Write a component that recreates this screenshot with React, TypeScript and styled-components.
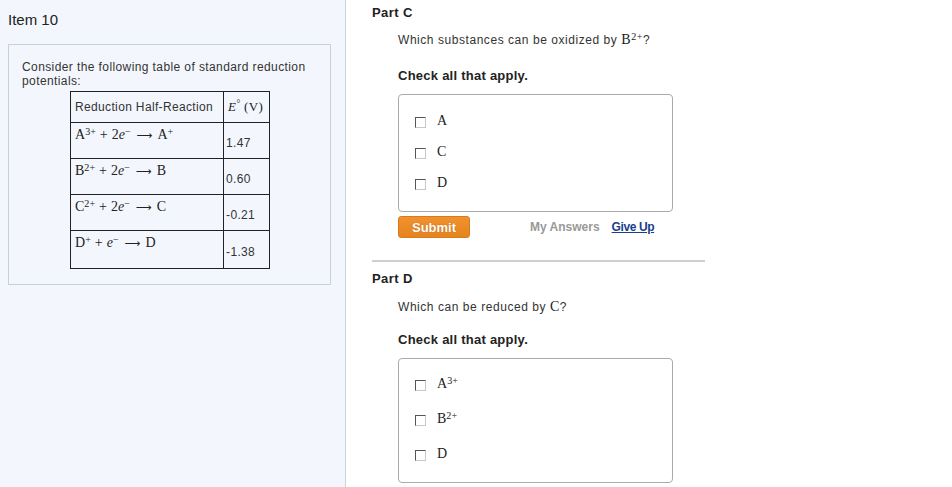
import React from "react";
import styled, { createGlobalStyle } from "styled-components";

const GlobalStyle = createGlobalStyle`
  html, body {
    margin: 0;
    padding: 0;
    background: #ffffff;
    font-family: "Liberation Sans", Arial, sans-serif;
    color: #333;
  }
`;

const Page = styled.div`
  display: flex;
  width: 952px;
  height: 487px;
  overflow: hidden;
`;

const LeftPanel = styled.div`
  width: 346px;
  flex: none;
  background: #f3f7fd;
  border-right: 1px solid #c9d2de;
  padding: 11px 0 0 8px;
  box-sizing: border-box;
`;

const ItemTitle = styled.div`
  font-size: 15px;
  line-height: 18px;
  color: #222;
`;

const InfoBox = styled.div`
  margin-top: 15px;
  width: 323px;
  box-sizing: border-box;
  border: 1px solid #c8d0dc;
  padding: 15px 0 15px 13px;
`;

const InfoText = styled.p`
  margin: 0 0 3px;
  font-size: 12px;
  line-height: 14px;
  letter-spacing: 0.4px;
  color: #333;
  padding-right: 10px;
`;

const Table = styled.table`
  border-collapse: collapse;
  margin-left: 48px;
  width: 200px;
  font-size: 12px;
`;

const HeadCell = styled.th`
  border: 1px solid #222;
  height: 30px;
  padding: 0 4px;
  font-weight: normal;
  text-align: left;
  white-space: nowrap;
  letter-spacing: 0.35px;
  color: #333;
`;

const ReactionCell = styled.td<{ $tall?: boolean }>`
  border: 1px solid #222;
  height: ${(p) => (p.$tall ? 33 : 31)}px;
  padding: 4px 4px 0;
  vertical-align: top;
  white-space: nowrap;
`;

const ValueCell = styled.td`
  border: 1px solid #222;
  padding: 4px 2px 0;
  vertical-align: middle;
  color: #333;
  letter-spacing: 0.3px;
`;

const Math = styled.span<{ $size?: number }>`
  font-family: "Liberation Serif", "DejaVu Serif", serif;
  font-size: ${(p) => p.$size ?? 14}px;
  color: #222;

  sup {
    font-size: 0.72em;
    line-height: 0;
    vertical-align: 0.42em;
  }

  i {
    font-style: italic;
  }
`;

const Op = styled.span`
  margin: 0 4px;
`;

const Arrow = styled.span`
  display: inline-block;
  margin: 0 5px 0 6px;
  font-family: "DejaVu Sans", sans-serif;
  font-size: 11px;
`;

const RightPanel = styled.div`
  flex: 1;
  padding: 5px 0 0 26px;
  box-sizing: border-box;
`;

const PartTitle = styled.div`
  font-size: 13px;
  line-height: 16px;
  font-weight: bold;
  letter-spacing: 0.4px;
  color: #222;
`;

const PartBody = styled.div`
  padding-left: 26px;
`;

const Question = styled.div<{ $gap: number }>`
  margin-top: ${(p) => p.$gap}px;
  font-size: 12px;
  line-height: 16px;
  letter-spacing: 0.55px;
  color: #333;
`;

const Hint = styled.div<{ $gap: number }>`
  margin-top: ${(p) => p.$gap}px;
  font-size: 13px;
  line-height: 16px;
  font-weight: bold;
  letter-spacing: 0.25px;
  color: #222;
`;

const ChoiceBox = styled.div<{ $height: number; $gap: number }>`
  margin-top: ${(p) => p.$gap}px;
  width: 275px;
  height: ${(p) => p.$height}px;
  box-sizing: border-box;
  border: 1px solid #aaa;
  border-radius: 4px;
  background: #fff;
  padding: ${(p) => (p.$height > 120 ? "16px" : "17px")} 0 0 16px;
  display: flex;
  flex-direction: column;
  gap: ${(p) => (p.$height > 120 ? "17px" : "13px")};
`;

const Choice = styled.label`
  display: flex;
  align-items: center;
  gap: 11px;
  height: 18px;
`;

const Box = styled.span`
  display: inline-block;
  width: 9px;
  height: 9px;
  margin-top: 3px;
  border-top: 1px solid #555;
  border-left: 1px solid #555;
  border-right: 1px solid #c8c8c8;
  border-bottom: 1px solid #c8c8c8;
  background: #fff;
`;

const Actions = styled.div`
  margin-top: 4px;
  display: flex;
  align-items: center;
  width: 275px;
`;

const SubmitButton = styled.button`
  width: 72px;
  height: 22px;
  border: 1px solid #d97b1c;
  border-radius: 3px;
  background: linear-gradient(#f0922e, #e5841f);
  color: #fff;
  font-family: "Liberation Sans", Arial, sans-serif;
  font-size: 13px;
  font-weight: bold;
  text-shadow: 0 0 1px #a85a10;
  padding: 0;
`;

const MyAnswers = styled.span`
  margin-left: 60px;
  font-size: 12px;
  font-weight: bold;
  color: #999;
`;

const GiveUp = styled.a`
  margin-left: 12px;
  font-size: 12px;
  font-weight: bold;
  letter-spacing: -0.4px;
  color: #1a3e8c;
  text-decoration: underline;
`;

const Divider = styled.hr`
  margin: 22px 0 0;
  width: 333px;
  border: none;
  border-top: 2px solid #cfcfcf;
`;

const Spacer = styled.div<{ $h: number }>`
  height: ${(p) => p.$h}px;
`;

const rows = [
  { from: "A", fromCharge: "3+", n: "2", to: "A", toCharge: "+", value: "1.47" },
  { from: "B", fromCharge: "2+", n: "2", to: "B", toCharge: "", value: "0.60" },
  { from: "C", fromCharge: "2+", n: "2", to: "C", toCharge: "", value: "-0.21" },
  { from: "D", fromCharge: "+", n: "", to: "D", toCharge: "", value: "-1.38" },
];

const App: React.FC = () => {
  return (
    <Page>
      <GlobalStyle />
      <LeftPanel>
        <ItemTitle>Item 10</ItemTitle>
        <InfoBox>
          <InfoText>
            Consider the following table of standard reduction potentials:
          </InfoText>
          <Table>
            <thead>
              <tr>
                <HeadCell>Reduction Half-Reaction</HeadCell>
                <HeadCell>
                  <Math $size={13}>
                    <i>E</i>
                    <sup>°</sup> (V)
                  </Math>
                </HeadCell>
              </tr>
            </thead>
            <tbody>
              {rows.map((r, i) => (
                <tr key={r.from}>
                  <ReactionCell $tall={i === rows.length - 1}>
                    <Math>
                      {r.from}
                      <sup>{r.fromCharge}</sup>
                      <Op>+</Op>
                      {r.n}
                      <i>e</i>
                      <sup>−</sup>
                      <Arrow>⟶</Arrow>
                      {r.to}
                      {r.toCharge && <sup>{r.toCharge}</sup>}
                    </Math>
                  </ReactionCell>
                  <ValueCell>{r.value}</ValueCell>
                </tr>
              ))}
            </tbody>
          </Table>
        </InfoBox>
      </LeftPanel>

      <RightPanel>
        <PartTitle>Part C</PartTitle>
        <PartBody>
          <Question $gap={11}>
            Which substances can be oxidized by{" "}
            <Math>
              B<sup>2+</sup>
            </Math>
            ?
          </Question>
          <Hint $gap={20}>Check all that apply.</Hint>
          <ChoiceBox $gap={10} $height={118}>
            {["A", "C", "D"].map((c) => (
              <Choice key={c}>
                <Box />
                <Math>{c}</Math>
              </Choice>
            ))}
          </ChoiceBox>
          <Actions>
            <SubmitButton>Submit</SubmitButton>
            <MyAnswers>My Answers</MyAnswers>
            <GiveUp href="#">Give Up</GiveUp>
          </Actions>
        </PartBody>
        <Divider />
        <Spacer $h={9} />
        <PartTitle>Part D</PartTitle>
        <PartBody>
          <Question $gap={12}>
            Which can be reduced by <Math>C</Math>?
          </Question>
          <Hint $gap={17}>Check all that apply.</Hint>
          <ChoiceBox $gap={10} $height={125}>
            <Choice>
              <Box />
              <Math>
                A<sup>3+</sup>
              </Math>
            </Choice>
            <Choice>
              <Box />
              <Math>
                B<sup>2+</sup>
              </Math>
            </Choice>
            <Choice>
              <Box />
              <Math>D</Math>
            </Choice>
          </ChoiceBox>
        </PartBody>
      </RightPanel>
    </Page>
  );
};

export default App;
